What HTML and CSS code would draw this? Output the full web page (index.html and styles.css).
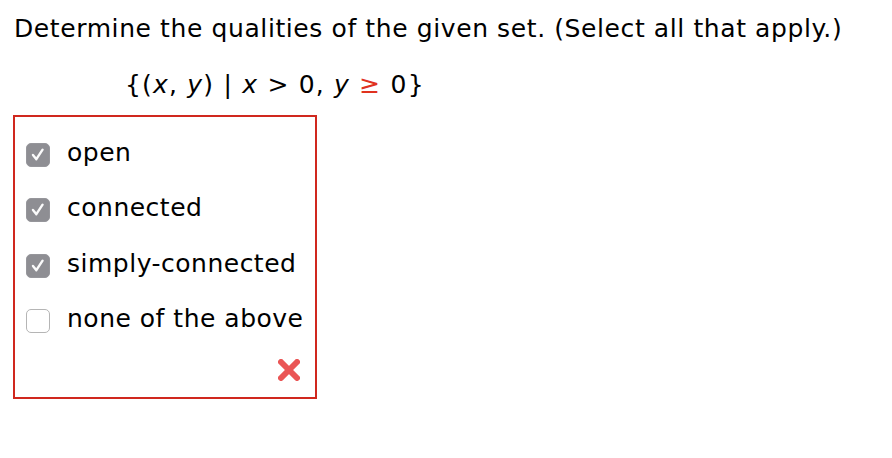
FILE: index.html
```html
<!DOCTYPE html>
<html>
<head>
<meta charset="utf-8">
<link rel="stylesheet" href="styles.css">
</head>
<body>
<div class="page">
  <p class="question">Determine the qualities of the given set. (Select all that apply.)</p>
  <p class="math">{(<i>x</i>, <i>y</i>) | <i>x</i> &gt; 0, <i>y</i> <span class="ge">≥</span> 0}</p>
  <div class="answers">
    <label class="row"><span class="cb checked"><svg viewBox="0 0 24 24" width="24" height="24"><path d="M6.5 12 L10.2 16.6 L17 6.2" fill="none" stroke="#fbfbfb" stroke-width="2.6" stroke-linecap="round" stroke-linejoin="round"/></svg></span><span class="lbl">open</span></label>
    <label class="row"><span class="cb checked"><svg viewBox="0 0 24 24" width="24" height="24"><path d="M6.5 12 L10.2 16.6 L17 6.2" fill="none" stroke="#fbfbfb" stroke-width="2.6" stroke-linecap="round" stroke-linejoin="round"/></svg></span><span class="lbl">connected</span></label>
    <label class="row"><span class="cb checked"><svg viewBox="0 0 24 24" width="24" height="24"><path d="M6.5 12 L10.2 16.6 L17 6.2" fill="none" stroke="#fbfbfb" stroke-width="2.6" stroke-linecap="round" stroke-linejoin="round"/></svg></span><span class="lbl">simply-connected</span></label>
    <label class="row"><span class="cb"></span><span class="lbl">none of the above</span></label>
    <div class="mark">
      <svg viewBox="0 0 28 28" width="28" height="28"><g stroke="#ea5656" stroke-width="6" stroke-linecap="round"><line x1="6" y1="6" x2="22" y2="22"/><line x1="22" y1="6" x2="6" y2="22"/></g></svg>
    </div>
  </div>
</div>
</body>
</html>
```

FILE: styles.css
```css
html, body {
  margin: 0;
  padding: 0;
  background: #fff;
}
body {
  font-family: "DejaVu Sans", Verdana, sans-serif;
  color: #000;
}
.page {
  padding: 13px 0 0 13px;
}
.question {
  margin: 0 0 0 1px;
  font-size: 25px;
  line-height: 32px;
  letter-spacing: 0.6px;
}
.math {
  margin: 24px 0 0 112px;
  font-size: 25px;
  line-height: 32px;
  letter-spacing: 1.2px;
}
.math i {
  font-style: italic;
}
.ge {
  color: #e0321f;
}
.answers {
  margin-top: 14px;
  width: 300px;
  height: 280px;
  border: 2px solid #d0281e;
  box-sizing: content-box;
  padding: 0;
  display: flex;
  flex-direction: column;
}
.row {
  display: flex;
  align-items: center;
  height: 24px;
  margin-left: 11px;
  gap: 17px;
  font-size: 25px;
  letter-spacing: 0.5px;
}
.row:first-child {
  margin-top: 26px;
}
.row + .row {
  margin-top: 31.4px;
}
.cb {
  width: 24px;
  height: 24px;
  box-sizing: border-box;
  border-radius: 5px;
  border: 1px solid #b5b5b5;
  background: #fff;
  flex: none;
  display: flex;
  align-items: center;
  justify-content: center;
}
.cb.checked {
  background: #8e8e93;
  border-color: #96969b;
}
.cb svg {
  display: block;
}
.lbl {
  line-height: 24px;
  position: relative;
  top: -2px;
}
.mark {
  display: flex;
  justify-content: flex-end;
  margin-top: 23px;
  margin-right: 12px;
}
.mark svg {
  display: block;
  filter: blur(0.6px);
}
```
